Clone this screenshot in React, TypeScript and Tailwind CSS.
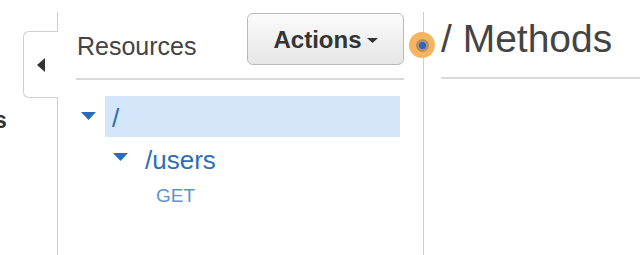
import React from "react";

function DownTri({ className }: { className?: string }) {
  return (
    <svg width="15" height="8" viewBox="0 0 15 8" className={className}>
      <polygon points="0,0 15,0 7.5,8" fill="#2b6bbd" />
    </svg>
  );
}

export default function App() {
  return (
    <div
      className="flex h-[255px] w-[640px] overflow-hidden bg-white"
      style={{ fontFamily: '"Liberation Sans", Arial, sans-serif' }}
    >
      {/* clipped left text */}
      <div className="w-[23px] shrink-0 overflow-hidden">
        <div className="mt-[109px] ml-[-6px] text-[23px] leading-none font-bold text-[#333]">s</div>
      </div>

      {/* tab column */}
      <div className="flex w-[35px] shrink-0 flex-col">
        <div className="mt-[12px] h-[19px] border-r border-[#cfcfcf]" />
        <div className="flex h-[67px] items-center rounded-l-[6px] border-y border-l border-[#cfcfcf] bg-white pl-[13px]">
          <svg width="8" height="14" viewBox="0 0 8 14">
            <polygon points="8,0 8,14 0,7" fill="#333" />
          </svg>
        </div>
        <div className="flex-1 border-r border-[#cfcfcf]" />
      </div>

      {/* resources panel */}
      <div className="flex w-[365px] shrink-0 flex-col pl-[18px] pr-[19px]">
        <div className="flex items-start justify-between border-b-2 border-[#dadada]">
          <div className="mt-[34px] pl-[1px] text-[25px] leading-none text-[#444]">Resources</div>
          <button className="mt-[13px] mb-[13px] flex h-[52px] w-[157px] items-center justify-center rounded-[6px] border border-[#b9b9b9] bg-gradient-to-b from-[#fbfbfb] to-[#e6e6e6] pt-[1px] text-[24px] leading-none font-bold text-[#333] shadow-[inset_0_1px_0_#fff]">
            Actions
            <svg width="11" height="5" viewBox="0 0 11 5" className="ml-[5px] mt-[1px]">
              <polygon points="0,0 11,0 5.5,5" fill="#333" />
            </svg>
          </button>
        </div>

        <div className="mt-[16px] flex items-start pl-[5px] pr-[4px]">
          <DownTri className="mt-[16px] shrink-0" />
          <div className="ml-[9px] h-[41px] flex-1 bg-[#d5e6fb] pl-[7px] pt-[9px] text-[26px] leading-none text-[#2e6db4]">
            /
          </div>
        </div>

        <div className="mt-[10px] flex items-start pl-[37px]">
          <DownTri className="mt-[6px] shrink-0" />
          <div className="ml-[17px] text-[26px] leading-none text-[#2e6db4]">/users</div>
        </div>

        <div className="mt-[13px] pl-[80px] text-[19px] leading-none text-[#5f92cc]">GET</div>
      </div>

      {/* methods panel */}
      <div className="relative flex flex-1 flex-col">
        <div className="mt-[12px] flex-1 border-l border-[#cfcfcf] pl-[17px]">
          <div className="border-b-2 border-[#dadada] pb-[19px]">
            <div className="mt-[7px] whitespace-nowrap text-[39px] leading-none text-[#444]">/ Methods</div>
          </div>
        </div>
        <div className="absolute left-[-14px] top-[32px] flex h-[26px] w-[26px] items-center justify-center rounded-full bg-[#f5b560]">
          <div className="flex h-[13px] w-[13px] items-center justify-center rounded-full bg-[#b48f6c]">
            <div className="h-[7px] w-[7px] rounded-full bg-[#2e66c1]" />
          </div>
        </div>
      </div>
    </div>
  );
}
